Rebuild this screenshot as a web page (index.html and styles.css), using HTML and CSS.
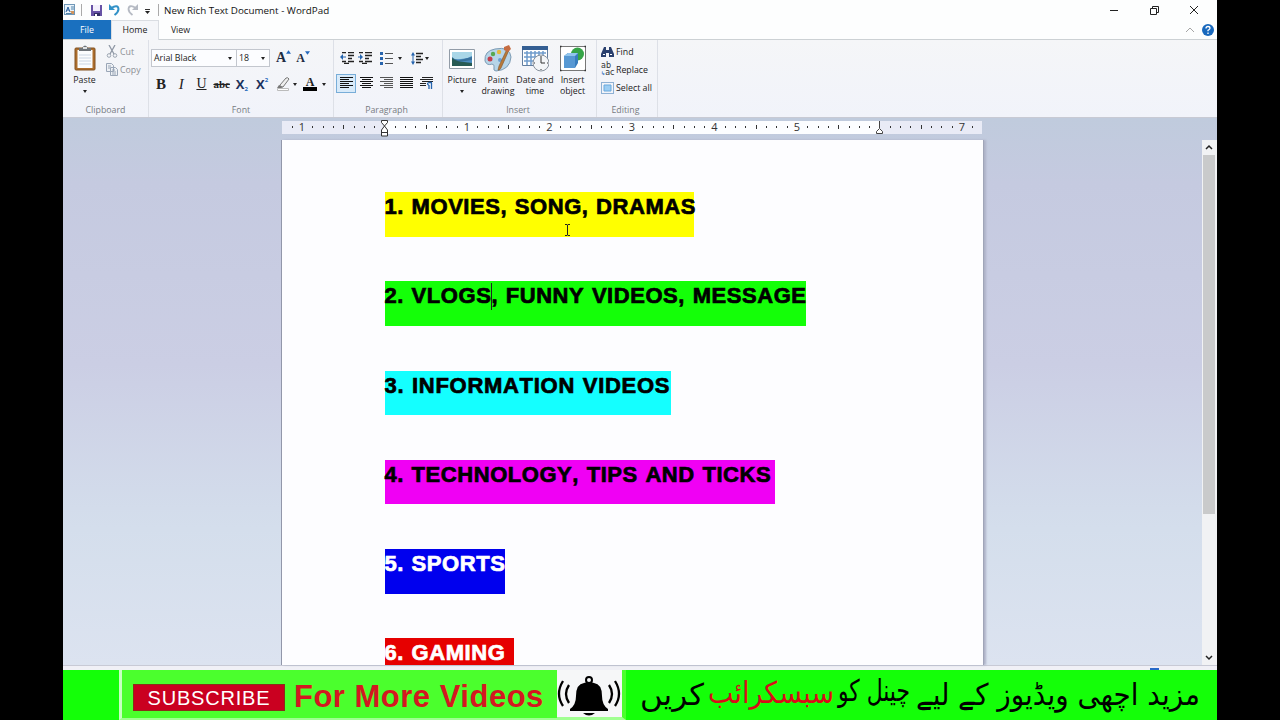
FILE: index.html
```
<!DOCTYPE html>
<html lang="en">
<head>
  <meta charset="UTF-8" />
  <title>New Rich Text Document - WordPad</title>
  <meta name="viewport" content="width=device-width, initial-scale=1.0" />
  <link rel="stylesheet" href="styles.css">
</head>
<body>
  <div class="window">
    <header class="titlebar">
      <svg class="app-icon" width="12" height="12" viewBox="0 0 12 12"><rect x=".5" y=".5" width="10" height="10" fill="#e8f3fb" stroke="#7098b8"/><path d="M2 8l2-5 2 5M3 6h2" fill="none" stroke="#285f9d"/><path d="M7 3h3M7 5h3M2 9.5h8" stroke="#5284aa"/><path d="M6 7h4v3H8z" fill="#d2945b"/></svg>
      <i class="divider"></i>
      <svg class="save" width="11" height="11" viewBox="0 0 11 11"><path d="M0 0h11v11H0z" fill="#6752a5"/><path d="M2 0h7v6H2z" fill="#f3f0fc"/><path d="M3 8h6v3H3z" fill="#302c63"/><path d="M4 9h2v2H4z" fill="#fff"/></svg>
      <svg class="undo" width="11" height="12" viewBox="0 0 11 12"><path d="M0 0v6h6z" fill="#3191c7"/><path d="M2 4Q9 0 9.500 5q0 3-4 6" fill="none" stroke="#3191c7" stroke-width="2"/></svg>
      <svg class="redo" width="11" height="12" viewBox="0 0 11 12"><path d="M11 0v6H5z" fill="#b5bac3"/><path d="M9 4Q2 0 1.500 5q0 3 4 6" fill="none" stroke="#b5bac3" stroke-width="1.800"/></svg>
      <svg class="more" width="5" height="5" viewBox="0 0 5 5"><path d="M0 .5h5" stroke="#333"/><path d="M0 2h5L2.500 5z" fill="#222"/></svg>
      <i class="divider"></i>
      <span class="title">New Rich Text Document - WordPad</span>
      <svg class="controls" width="90" height="12" viewBox="0 0 90 12"><path d="M1 6.500h8M41.500 4.500h6v6h-6zM43.500 4.500v-2h6v6h-2M81 2l8 8M89 2l-8 8" fill="none" stroke="#222"/></svg>
    </header>
    <nav class="tabs">
      <a class="tab file">File</a>
      <a class="tab active">Home</a>
      <a class="tab">View</a>
      <svg class="tab-tools" width="32" height="14" viewBox="0 0 32 14"><path d="M1 9l4-4 4 4" fill="none" stroke="#a5a5a5"/><circle cx="23" cy="7" r="6" fill="#1868bd"/><path d="M21 5.500q0-2 2-2t2 1.800q0 1-2 2v1M23 9.500v1.500" fill="none" stroke="#fff" stroke-width="1.300"/></svg>
    </nav>

    <section class="ribbon">
      <div class="group clipboard">
        <div class="group-body">
          <div class="big-button paste">
            <svg width="22" height="27" viewBox="0 0 22 27"><rect x="1" y="3" width="20" height="22" rx="1" fill="#ad6e2d" stroke="#825322"/><path d="M3.500 5h15v18h-15z" fill="#fbfdfe"/><path d="M5 10h12M5 13h12M5 16h12M5 19h12" stroke="#cbd6e3"/><path d="M5 3h3q3-5 6 0h3v3H5z" fill="#6e7479"/><path d="M9 2h4v2H9z" fill="#dce0e3"/></svg>
            <span>Paste</span>
            <i class="caret"></i>
          </div>
          <div class="side-list muted">
            <div><svg width="12" height="13" viewBox="0 0 12 13"><path d="M3 0l5 9M9 0L4 9" stroke="#8f98a5" stroke-width="1.300"/><circle cx="3" cy="10.500" r="1.800" fill="none" stroke="#9ca5b1"/><circle cx="9" cy="10.500" r="1.800" fill="none" stroke="#9ca5b1"/></svg><span>Cut</span></div>
            <div><svg width="12" height="13" viewBox="0 0 12 13"><path d="M.5.5h5l2 2v6h-7zM4.500 4.500h5l2 2v6h-7z" fill="#eef1f5" stroke="#9aa6b7"/><path d="M2 3h3M2 5h2M6 7h3M6 9h4M6 11h4" stroke="#9aa6b7"/></svg><span>Copy</span></div>
          </div>
        </div>
        <div class="group-label">Clipboard</div>
      </div>

      <div class="group font">
        <div class="group-body rows">
          <div class="row">
            <div class="combo family">Arial Black<i class="caret"></i></div>
            <div class="combo size">18<i class="caret"></i></div>
            <span class="grow">A<svg width="5" height="4" viewBox="0 0 6 4"><path d="M0 4l3-4 3 4z" fill="#2467ba"/></svg></span>
            <span class="shrink">A<svg width="5" height="4" viewBox="0 0 6 4"><path d="M0 0h6L3 4z" fill="#2467ba"/></svg></span>
          </div>
          <div class="row styles">
            <span class="cell bold">B</span>
            <span class="cell italic">I</span>
            <span class="cell underline">U</span>
            <span class="cell strike">abc</span>
            <span class="cell script">X<sub>2</sub></span>
            <span class="cell script">X<sup>2</sup></span>
            <svg class="marker" width="15" height="14" viewBox="0 0 15 14"><path d="M4 8l6-7q2-1 3 1L7 10H4z" fill="#eee" stroke="#777"/><path d="M3 8l4 2-2 1H1z" fill="#777"/><path d="M1.500 11.500h11v2h-11z" fill="#fff" stroke="#bbb"/></svg>
            <i class="caret"></i>
            <span class="font-color">A</span>
            <i class="caret"></i>
          </div>
        </div>
        <div class="group-label">Font</div>
      </div>

      <div class="group paragraph">
        <div class="group-body rows">
          <div class="row">
            <svg class="para-icon" width="14" height="12" viewBox="0 0 14 12"><path d="M2 .5h4M8 .5h6M8 3.500h6M8 6.500h4M2 9.500h4M8 9.500h6M4 11.500h5" stroke="#222" stroke-width="1.500"/><path d="M0 5l3-3v6z" fill="#2464af"/><path d="M2 5h4" stroke="#2464af"/></svg>
            <svg class="para-icon" width="14" height="12" viewBox="0 0 14 12"><path d="M1 .5h4M7 .5h7M7 3.500h7M7 6.500h4M1 9.500h4M7 9.500h7M4 11.500h5" stroke="#222" stroke-width="1.500"/><path d="M5 5L2 2v6z" fill="#2464af"/><path d="M0 5h4" stroke="#2464af"/></svg>
            <svg class="para-icon bullets" width="13" height="13" viewBox="0 0 13 13"><path d="M5 1.500h8M5 6.500h8M5 11.500h8" stroke="#555"/><path d="M0 0h3v3H0zM0 5h3v3H0zM0 10h3v3H0z" fill="#2864ad"/></svg>
            <i class="caret"></i>
            <svg class="para-icon spacing" width="12" height="13" viewBox="0 0 12 13"><path d="M5 1.500h7M5 4.500h5M5 7.500h7M5 10.500h5" stroke="#222" stroke-width="1.300"/><path d="M0 3.500L2 0l2 3.500H2.500v6H4L2 13 0 9.500h1.500v-6z" fill="#2464af"/></svg>
            <i class="caret"></i>
          </div>
          <div class="row aligns">
            <span class="cell selected"><svg width="13" height="12" viewBox="0 0 13 12"><path d="M0 .5h13M0 2.500h9M0 4.500h13M0 6.500h9M0 8.500h13M0 10.500h9" stroke="#111"/></svg></span>
            <span class="cell"><svg width="13" height="12" viewBox="0 0 13 12"><path d="M0 .5h13M2 2.500h9M0 4.500h13M2 6.500h9M0 8.500h13M2 10.500h9" stroke="#111"/></svg></span>
            <span class="cell"><svg width="13" height="12" viewBox="0 0 13 12"><path d="M0 .5h13M4 2.500h9M0 4.500h13M4 6.500h9M0 8.500h13M4 10.500h9" stroke="#555"/></svg></span>
            <span class="cell"><svg width="13" height="12" viewBox="0 0 13 12"><path d="M0 .5h13M0 2.500h13M0 4.500h13M0 6.500h13M0 8.500h13M0 10.500h13" stroke="#111"/></svg></span>
            <span class="cell"><svg width="13" height="12" viewBox="0 0 13 12"><path d="M2 .5h11M0 2.500h13M2 4.500h11M0 6.500h6M0 8.500h6" stroke="#222"/><path d="M12 5.500H9q-3 1 0 3v3.500M11.500 6v6" fill="none" stroke="#2565af" stroke-width="1.300"/></svg></span>
          </div>
        </div>
        <div class="group-label">Paragraph</div>
      </div>

      <div class="group insert">
        <div class="group-body">
          <div class="big-button picture">
            <svg width="26" height="27" viewBox="0 0 26 27"><path d="M.5 4.500h25v19H.5z" fill="#fff" stroke="#929ca7"/><path d="M3 7h20v14H3z" fill="#4b8dc1"/><path d="M3 7h20v4q-8 4-20 3z" fill="#a9d6e7"/><path d="M3 12q4 4 8 3l12-3v3L3 18z" fill="#38709b"/><path d="M3 13q5 4 12 4l8 1v3H3z" fill="#285b54"/></svg>
            <span>Picture</span>
            <i class="caret"></i>
          </div>
          <div class="big-button paint">
            <svg width="28" height="27" viewBox="0 0 28 27"><path d="M1 16Q0 6 11 4q15-3 16 8-1 13-15 14-3 0-2-4 1-2-2-3-5 2-7-3z" fill="#b7d5e8" stroke="#7c9bb4"/><circle cx="6" cy="14" r="2.500" fill="#c33f4c"/><circle cx="9" cy="9" r="2.200" fill="#58a850"/><circle cx="15" cy="7" r="2.200" fill="#e7b93c"/><circle cx="16" cy="15" r="2" fill="#6a9fd2"/><path d="M23 4l2 1-8 18q-2 3-3 2l1-4z" fill="#b87938" stroke="#82562b" stroke-width=".6"/><path d="M20 2l5-2 2 4-3 3-4-2z" fill="#c56d42"/></svg>
            <span>Paint<br>drawing</span>
          </div>
          <div class="big-button date">
            <svg width="28" height="27" viewBox="0 0 28 27"><path d="M1.500 1.500h25v19h-25z" fill="#fff" stroke="#637e9f"/><path d="M1 1h26v4H1z" fill="#345f93"/><path d="M3 8h22M3 12h22M3 16h15M6 6v14M10 6v14M14 6v14M18 6v9M22 6v8" stroke="#6f9ccc" stroke-width="1.500"/><circle cx="20" cy="18" r="8" fill="#f3f5f7" stroke="#87919c"/><path d="M20 12v6h4M20 11v1M20 24v1M13 18h1M26 18h1" fill="none" stroke="#333"/></svg>
            <span>Date and<br>time</span>
          </div>
          <div class="big-button object">
            <svg width="26" height="27" viewBox="0 0 26 27"><path d="M.5 1.500h25v24H.5z" fill="#fff" stroke="#777"/><circle cx="17.500" cy="9" r="6.500" fill="#36a447"/><path d="M4 11l4-3h10v10l-3 5H4z" fill="#387dbe"/><path d="M4 11h11v12H4z" fill="#5798d3"/><path d="M4 11l4-3h10l-3 3z" fill="#91c5ed"/><path d="M0 1.500h1.500M24.500 1.500H26M0 25.500h1.500M24.500 25.500H26" stroke="#333" stroke-width="1.500"/></svg>
            <span>Insert<br>object</span>
          </div>
        </div>
        <div class="group-label">Insert</div>
      </div>

      <div class="group editing">
        <div class="group-body side-list">
          <div><svg width="13" height="12" viewBox="0 0 13 12"><path d="M3 1h2v3h3V1h2l3 7v3H8V7H5v4H0V8z" fill="#293f6d"/><path d="M2 8h2v1H2zM9 8h2v1H9z" fill="#fff"/></svg><span>Find</span></div>
          <div><span class="replace-icon">ab<br><b>↳</b>ac</span><span>Replace</span></div>
          <div><svg width="13" height="12" viewBox="0 0 13 12"><rect x=".5" y=".5" width="12" height="11" fill="none" stroke="#2c6eae" stroke-dasharray="1 1"/><path d="M3 3h7v6H3z" fill="#9bcdf3" stroke="#6ba9dc"/></svg><span>Select all</span></div>
        </div>
        <div class="group-label">Editing</div>
      </div>
    </section>

    <main class="workspace">
      <div class="sheet">
        <svg class="ruler" id="ruler" width="702" height="20" viewBox="0 0 702 20">
          <rect x="0" y="2" width="700" height="13" fill="#e9ebf6"/>
          <rect x="102.500" y="2" width="495" height="13" fill="#fcfdff"/>
          <g id="ticks"></g>
          <path d="M99.500 1.500h6v2l-3 3.500 3 4v6h-6v-6l3-4-3-3.500zM99.500 13.500h6" fill="#fff" stroke="#333"/>
          <path d="M597.500 2v7M594.500 14.500v-2l3-3 3 3v2z" fill="#fff" stroke="#444"/>
        </svg>
        <article class="page">
          <p><mark class="yellow">1. MOVIES, SONG, DRAMAS</mark></p>
          <p><mark class="green">2. VLOGS<i class="text-caret"></i>, FUNNY VIDEOS, MESSAGE</mark></p>
          <p><mark class="cyan">3. INFORMATION VIDEOS</mark></p>
          <p><mark class="magenta">4. TECHNOLOGY, TIPS AND TICKS</mark></p>
          <p><mark class="blue">5. SPORTS</mark></p>
          <p><mark class="red">6. GAMING</mark></p>
          <svg class="pointer" width="7" height="12" viewBox="0 0 7 12"><path d="M1 .5h2l.5.5.5-.5h2M3.500 1v10M1 11.500h2l.5-.5.5.5h2" fill="none" stroke="#222"/></svg>
        </article>
      </div>
      <div class="scrollbar">
        <svg width="13" height="15" viewBox="0 0 13 15"><path d="M4 9l3-3 3 3" fill="none" stroke="#222" stroke-width="1.500"/></svg>
        <div class="thumb"></div>
        <svg width="13" height="15" viewBox="0 0 13 15"><path d="M4 6l3 3 3-3" fill="none" stroke="#222" stroke-width="1.500"/></svg>
      </div>
    </main>
    <div class="status"><i></i></div>

    <footer class="banner">
      <div class="banner-start"></div>
      <div class="promo">
        <span class="subscribe">SUBSCRIBE</span>
        <span class="promo-text">For More Videos</span>
      </div>
      <div class="bell">
        <svg width="65" height="44" viewBox="0 0 65 44"><circle cx="32" cy="7" r="3" fill="none" stroke="#000" stroke-width="2"/><path d="M13 36q6-4 6-13 0-12 8-13 5-2 10 0 8 1 8 13 0 9 6 13v2H13z"/><path d="M26 40h12q-6 5-12 0z"/><path d="M6 8q-8 13 0 25M12 12q-6 9 0 18M58 8q8 13 0 25M52 12q6 9 0 18" fill="none" stroke="#000" stroke-width="2.300"/></svg>
      </div>
      <svg class="urdu" width="591" height="50" viewBox="0 0 591 50" lang="ur">
        <text x="574" y="35" textLength="284" lengthAdjust="spacingAndGlyphs" direction="rtl">مزید اچھی ویڈیوز کے لیے</text>
        <text x="284" y="31" textLength="72" lengthAdjust="spacingAndGlyphs" direction="rtl">چینل کو</text>
        <text class="accent" x="208" y="33" textLength="126" lengthAdjust="spacingAndGlyphs" direction="rtl">سبسکرائب</text>
        <text x="78" y="35" textLength="64" lengthAdjust="spacingAndGlyphs" direction="rtl">کریں</text>
      </svg>
    </footer>
  </div>

  <script>
    // eight divisions per inch, numbered on the whole inch
    const inch = 82.5;
    const zero = 102.5;
    let marks = '';
    for (let i = -9; i <= 57; i++) {
      const x = zero + i * inch / 8;
      if (i === 0 || i === 48) continue;
      if (i % 8 === 0) {
        marks += `<text x="${x}" y="12">${Math.abs(i / 8)}</text>`;
      } else {
        const h = i % 4 === 0 ? 4 : 2;
        marks += `<rect x="${Math.round(x)}" y="${8 - h / 2}" width="1" height="${h}" />`;
      }
    }
    document.getElementById('ticks').innerHTML = marks;
  </script>
</body>
</html>
```
FILE: styles.css
```
* {
  box-sizing: border-box;
}

body {
  margin: 0;
  background: #000;
  color: #222;
  font-family: 'Open Sans', 'Noto Sans', sans-serif;
  font-size: 8.8px;
  overflow: hidden;
}

svg {
  display: block;
  flex: none;
}

.window {
  width: 1154px;
  height: 720px;
  margin-left: 63px;
  display: flex;
  flex-direction: column;
  background: #fdfefe;
  overflow: hidden;
}

.titlebar {
  height: 20px;
  flex: none;
  display: flex;
  align-items: center;
}

.divider {
  width: 1px;
  height: 12px;
  background: #aaa;
}

.app-icon {
  margin: 0 5px 0 1px;
}

.save {
  margin-left: 9px;
}

.undo {
  margin-left: 7px;
}

.redo {
  margin-left: 7px;
}

.more {
  margin: 2px 8px 0 7px;
}

.title {
  margin-left: 5px;
  font-size: 9.8px;
  color: #111;
  white-space: nowrap;
}

.controls {
  margin-left: auto;
  margin-right: 18px;
}

.tabs {
  height: 20px;
  flex: none;
  display: flex;
  border-bottom: 1px solid #ccd1d4;
}

.tab {
  width: 43px;
  line-height: 20px;
  text-align: center;
}

.tab.file {
  width: 48px;
  background: #1a70bf;
  color: #fff;
}

.tab.active {
  width: 48px;
  height: 20px;
  line-height: 19px;
  background: #f5f6f9;
  border: 1px solid #dadde2;
  border-bottom: none;
}

.tab-tools {
  margin: 3px 0 0 auto;
}

.ribbon {
  height: 77px;
  flex: none;
  display: flex;
  background: linear-gradient(#f5f6f8, #f1f3fa);
}

.group {
  display: flex;
  flex-direction: column;
  border-right: 1px solid #dde0e7;
}

.group-body {
  display: flex;
  height: 63px;
}

.group-label {
  line-height: 14px;
  text-align: center;
  color: #777b82;
}

.clipboard { width: 86px; }
.font { width: 185px; }
.paragraph { width: 109px; }
.insert { width: 154px; }
.editing { width: 61px; }

.editing .group-label {
  padding-right: 3px;
}

.insert .group-label,
.paragraph .group-label {
  padding-right: 3px;
}

.insert .group-body {
  padding-left: 1px;
}

.caret {
  flex: none;
  border: 2.5px solid transparent;
  border-top: 3px solid #222;
  border-bottom: none;
}

.big-button {
  padding-top: 5px;
  display: flex;
  flex-direction: column;
  align-items: center;
  text-align: center;
  line-height: 11px;
  white-space: nowrap;
}

.big-button span {
  margin-top: 3px;
}

.big-button .caret {
  margin-top: 4px;
}

.paste { width: 43px; }
.picture { width: 36px; }
.paint { width: 36px; }
.date { width: 38px; }
.object { width: 37px; }

.side-list {
  display: flex;
  flex-direction: column;
  padding-top: 3px;
}

.side-list div {
  height: 18px;
  display: flex;
  align-items: center;
  gap: 2px;
  padding-bottom: 1px;
  white-space: nowrap;
}

.muted {
  color: #8b8e94;
}

.editing .side-list {
  padding-left: 4px;
}

.rows {
  flex-direction: column;
}

.row {
  display: flex;
  align-items: center;
  height: 26px;
}

.font .row {
  padding-left: 2px;
}

.rows .row:first-child {
  margin-top: 5px;
}

.combo {
  height: 18px;
  display: flex;
  align-items: center;
  justify-content: space-between;
  padding: 0 4px 0 2px;
  border: 1px solid #c3c7ce;
  background: #fcfdff;
}

.family { width: 86px; }

.size {
  width: 34px;
  margin-left: -1px;
}

.grow,
.shrink {
  display: flex;
  margin-left: 6px;
  color: #1d2c42;
  font: bold 14px 'Liberation Serif', serif;
}

.shrink {
  font-size: 12px;
  margin-left: 5px;
}

.styles {
  font-family: 'Liberation Serif', serif;
}

.cell {
  width: 20.2px;
  height: 19px;
  display: flex;
  align-items: center;
  justify-content: center;
}

.bold { font-size: 15px; font-weight: bold; }
.italic { font-size: 15px; font-style: italic; }
.underline { font-size: 14px; text-decoration: underline; }
.strike { font-size: 11px; font-weight: bold; text-decoration: line-through; }

.script {
  font: bold 13px 'Open Sans', sans-serif;
  color: #1c315c;
}

.script sub,
.script sup {
  font-size: 6px;
  color: #2467ba;
}

.script sub { margin-top: 9px; }
.script sup { margin-top: -9px; }

.marker {
  margin: 0 2px 0 4px;
}

.font-color {
  width: 14px;
  height: 14px;
  margin: 0 5px 0 6px;
  border-bottom: 4px solid #000;
  font: bold 12px/10px 'Liberation Serif', serif;
  text-align: center;
}

.paragraph .row {
  padding-left: 2px;
}

.para-icon {
  margin-left: 4px;
}

.bullets {
  margin: 0 5px 0 8px;
}

.spacing {
  margin: 0 2px 0 9px;
}

.aligns {
  margin-top: -1px;
}

.selected {
  background: #d8eaf9;
  border: 1px solid #78add8;
}

.replace-icon {
  width: 13px;
  font: 8px/7px 'DejaVu Sans', sans-serif;
  color: #333;
}

.replace-icon b {
  font-size: 5px;
  color: #2467ba;
}

.workspace {
  height: 548px;
  flex: none;
  display: flex;
  justify-content: space-between;
  padding-left: 219px;
  border-top: 1px solid #c8cad4;
  background: linear-gradient(#c0cbdd, #c5cae0 12%, #cbcee4 45%, #d4deec 75%, #dce3f0);
}

.sheet {
  width: 702px;
  display: flex;
  flex-direction: column;
}

.ruler {
  margin: 1px 0;
  font-size: 11px;
  text-anchor: middle;
  fill: #333;
}

.page {
  position: relative;
  flex: 1;
  padding: 52px 0 0 102.500px;
  background: #fdfdff;
  border-right: 1px solid #a0a5b8;
  box-shadow: -1px 0 #9297aa, 2px 0 2px #aeb2c7;
  overflow: hidden;
}

.page p {
  height: 44.500px;
  margin: 0 0 44.800px;
}

.page mark {
  display: block;
  height: 44.500px;
  color: #000;
  font: bold 22px/30px 'Liberation Sans', sans-serif;
  font-kerning: none;
  letter-spacing: .55px;
  word-spacing: 1px;
  -webkit-text-stroke: .7px currentColor;
  white-space: nowrap;
}

.page .yellow { width: 309px; background: #ff0; }
.page .green { width: 421px; background: #14ff08; }
.page .cyan { width: 286px; background: #14ffff; letter-spacing: .7px; }
.page .magenta { width: 390px; background: #f000f4; }
.page .blue { width: 120px; background: #00e; color: #fff; }
.page .red { width: 129px; background: #e60000; color: #fff; }

.text-caret {
  display: inline-block;
  width: 1px;
  height: 27px;
  margin: -2px -1px 0 0;
  background: #222;
  vertical-align: middle;
}

.pointer {
  position: absolute;
  left: 282px;
  top: 84px;
}

.scrollbar {
  width: 15px;
  margin-top: 22px;
  padding-right: 2px;
  display: flex;
  flex-direction: column;
  background: #f1f2f4;
}

.thumb {
  height: 359px;
  margin: 0 0 auto 1px;
  background: #c9cacb;
}

.status {
  height: 5px;
  flex: none;
  display: flex;
  align-items: flex-end;
  background: #f0f0f6;
  border-top: 1px solid #c8cad5;
}

.status i {
  width: 9px;
  height: 2px;
  margin-left: 1087px;
  background: #2869c8;
}

.banner {
  height: 50px;
  flex: none;
  display: flex;
  background: #14ff08;
}

.banner-start {
  width: 56px;
}

.promo {
  width: 438px;
  display: flex;
  align-items: center;
  padding: 6px 0 0 11px;
  border-left: 3px solid #c9ffc2;
  border-bottom: 2px solid #a0ff91;
  background: #4bff2d;
  white-space: nowrap;
}

.subscribe {
  width: 152px;
  height: 27px;
  border: 1px solid #883018;
  background: #ca0020;
  color: #fff;
  font: 20px/26px 'Liberation Sans', sans-serif;
  letter-spacing: .8px;
  text-align: center;
}

.promo-text {
  margin-left: 9px;
  color: #d31820;
  font: bold 31px/40px 'Liberation Sans', sans-serif;
  letter-spacing: .5px;
}

.bell {
  width: 69px;
  padding-top: 3px;
  border-right: 4px solid #4bff2d;
  border-bottom: 3px solid #a0ff91;
  background: #f6f7f8;
}

.urdu {
  font-family: 'DejaVu Sans', sans-serif;
  font-size: 30px;
}

.urdu .accent {
  fill: #d80c18;
}
```
